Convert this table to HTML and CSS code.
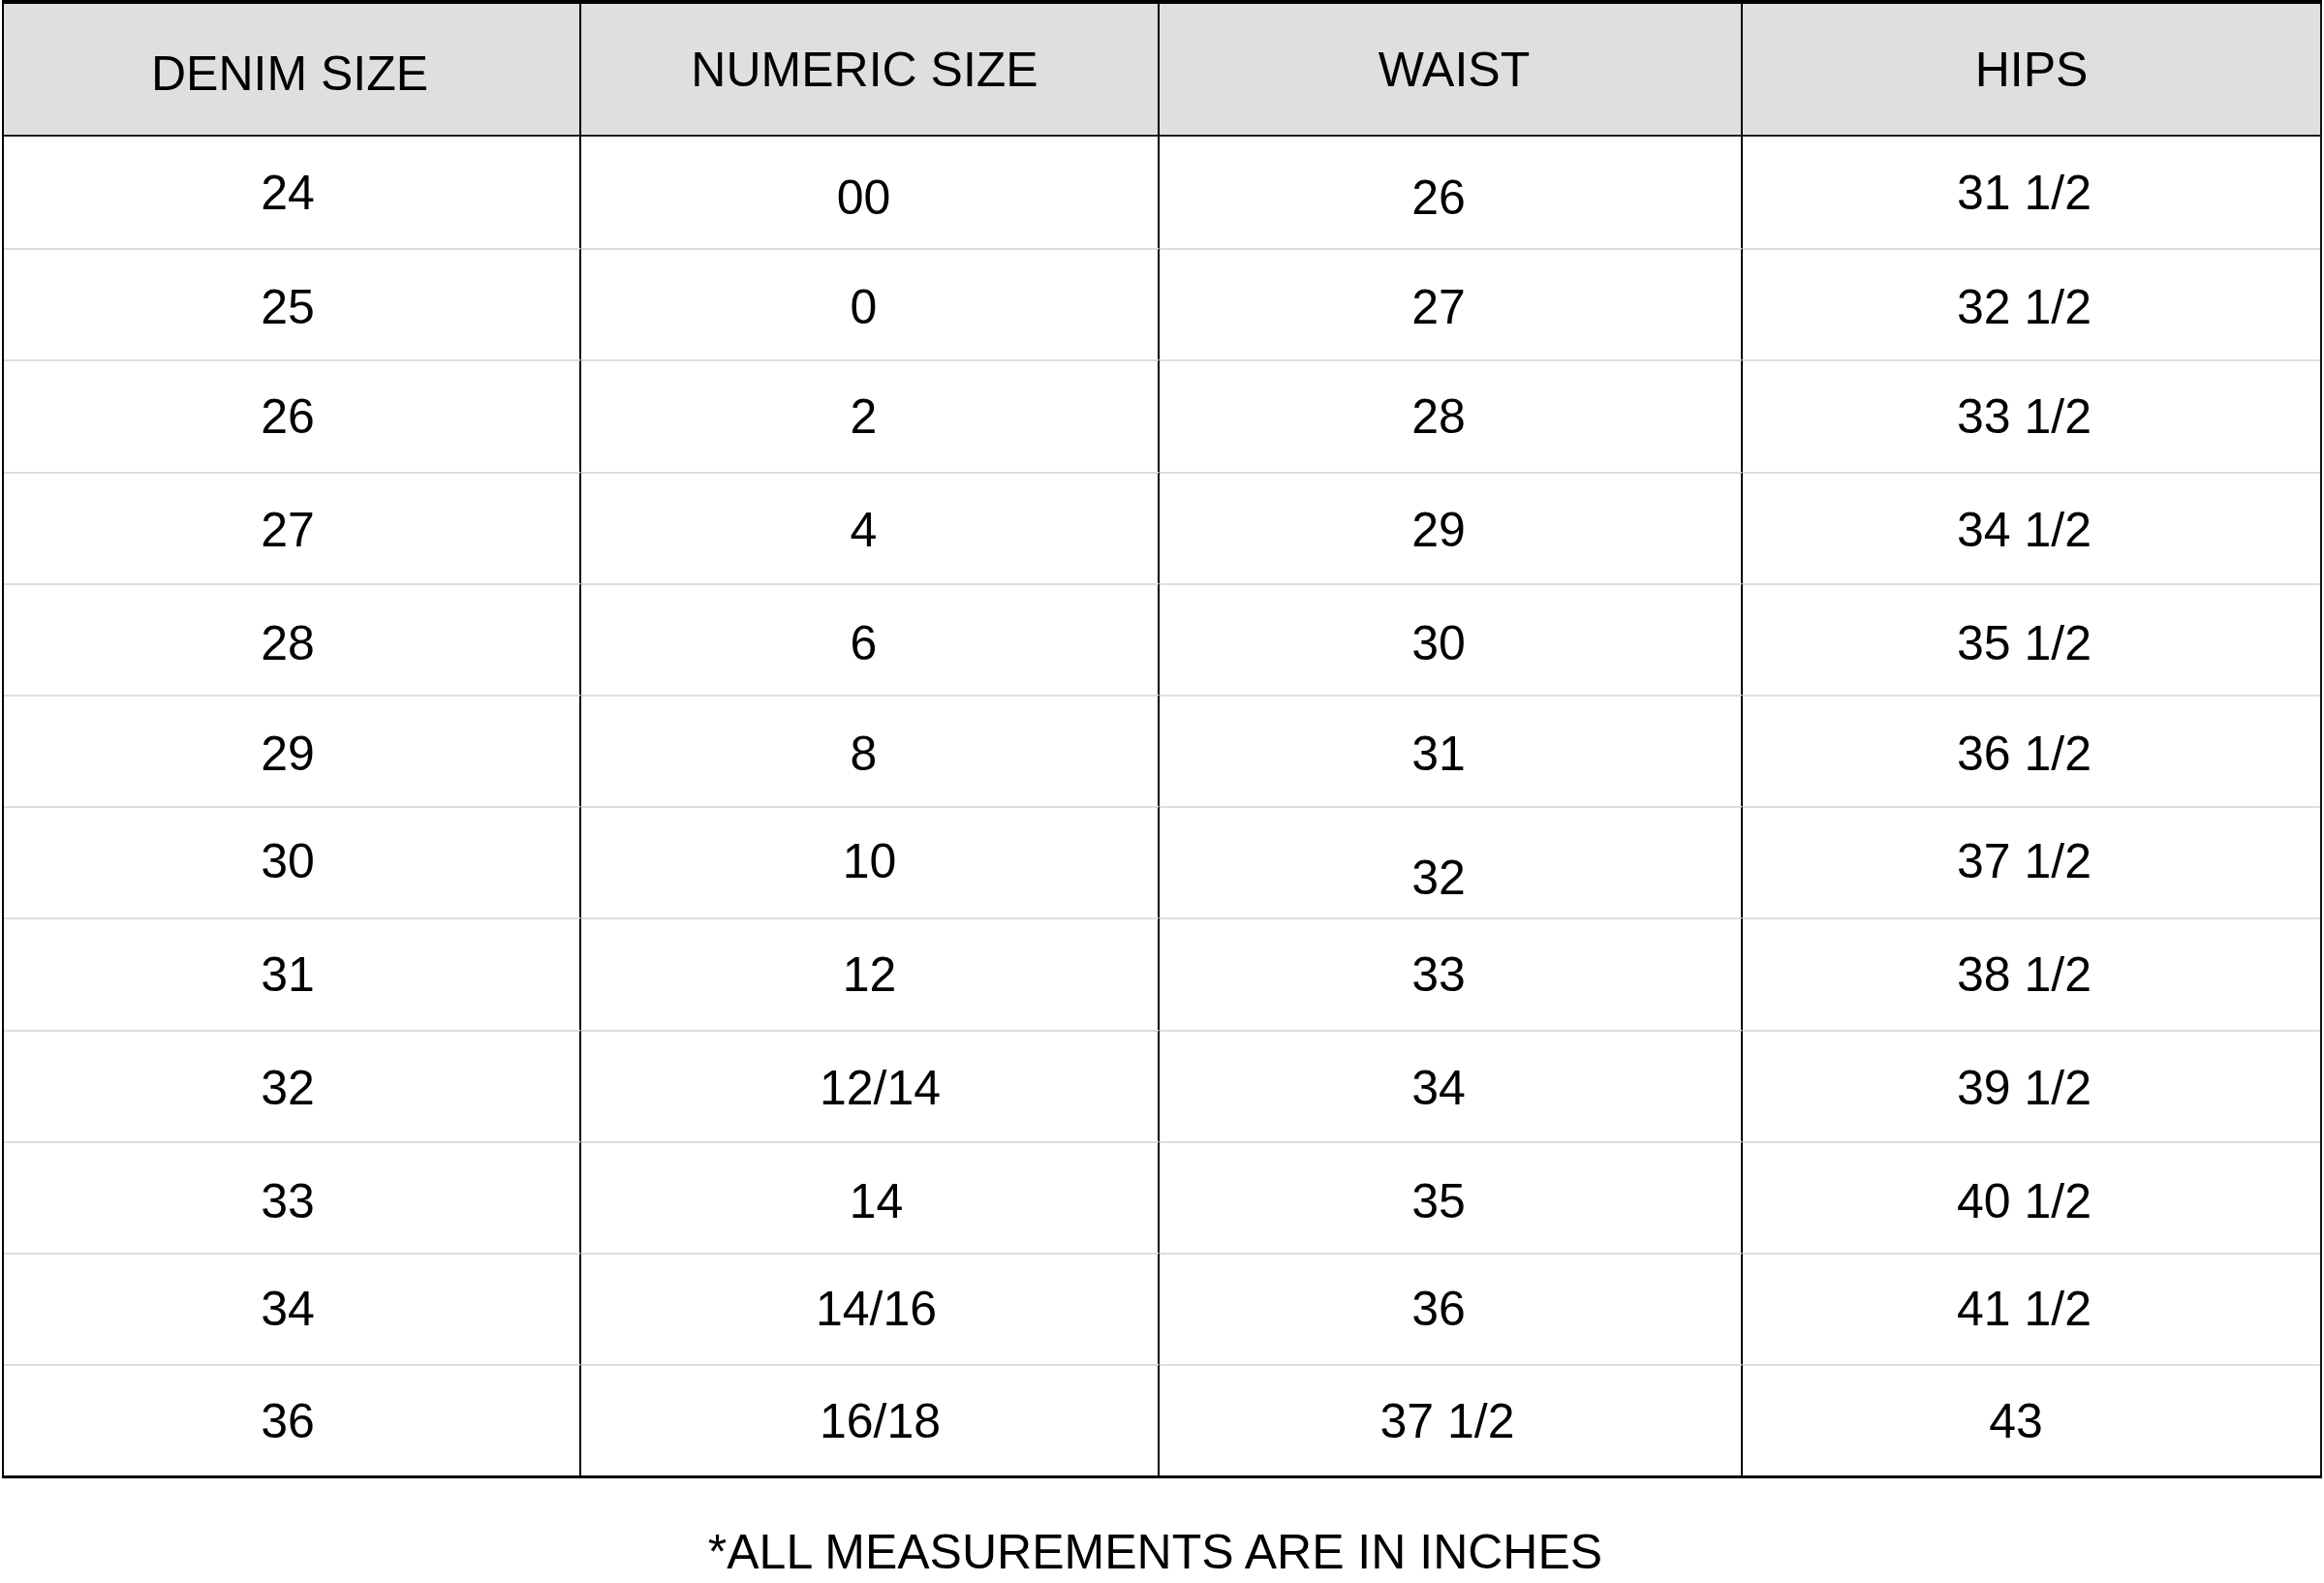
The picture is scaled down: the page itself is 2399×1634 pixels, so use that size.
FILE: index.html
```html
<!DOCTYPE html>
<html lang="en">
<head>
<meta charset="utf-8">
<title>Denim Size Chart</title>
<link rel="stylesheet" href="styles.css">
</head>
<body>
<main class="page">
  <table class="chart">
    <thead>
      <tr class="head-row">
        <th class="c1 h-low">DENIM SIZE</th>
        <th class="c2">NUMERIC SIZE</th>
        <th class="c3">WAIST</th>
        <th class="c4">HIPS</th>
      </tr>
    </thead>
    <tbody>
      <tr><td>24</td><td class="d-lo">00</td><td class="d-lo">26</td><td>31 1/2</td></tr>
      <tr class="r-low-s"><td>25</td><td>0</td><td>27</td><td>32 1/2</td></tr>
      <tr><td>26</td><td>2</td><td>28</td><td>33 1/2</td></tr>
      <tr class="r-low-s"><td>27</td><td>4</td><td>29</td><td>34 1/2</td></tr>
      <tr class="r-low"><td>28</td><td>6</td><td>30</td><td>35 1/2</td></tr>
      <tr class="r-low-s"><td>29</td><td>8</td><td>31</td><td>36 1/2</td></tr>
      <tr class="r-high"><td>30</td><td class="two">10</td><td class="d-far">32</td><td>37 1/2</td></tr>
      <tr><td>31</td><td class="two">12</td><td>33</td><td>38 1/2</td></tr>
      <tr class="r-low-s"><td>32</td><td class="wide">12/14</td><td>34</td><td>39 1/2</td></tr>
      <tr class="r-low"><td>33</td><td class="wide-s">14</td><td>35</td><td>40 1/2</td></tr>
      <tr><td>34</td><td class="wide-s">14/16</td><td>36</td><td>41 1/2</td></tr>
      <tr class="last"><td>36</td><td class="wide">16/18</td><td class="half">37 1/2</td><td class="short">43</td></tr>
    </tbody>
  </table>
  <p class="note">*ALL MEASUREMENTS ARE IN INCHES</p>
</main>
</body>
</html>
```

FILE: styles.css
```css
html, body {
  margin: 0;
  padding: 0;
  background: #ffffff;
}

body {
  font-family: "Liberation Sans", Arial, sans-serif;
  color: #000000;
}

.page {
  width: 2399px;
  padding-left: 2px;
  box-sizing: border-box;
}

.chart {
  width: 2395px;
  table-layout: fixed;
  border-collapse: separate;
  border-spacing: 0;
  border-top: 4px solid #000;
  border-left: 2px solid #000;
  border-right: 2px solid #111;
  border-bottom: 3px solid #000;
  font-size: 50px;
  line-height: 56px;
}

.chart th,
.chart td {
  box-sizing: border-box;
  padding: 0;
  text-align: center;
  vertical-align: middle;
  border-right: 2px solid #000;
  font-weight: normal;
}

.chart th:last-child,
.chart td:last-child {
  border-right: 0;
}

.chart th.c1 { width: 596px; }
.chart th.c2 { width: 597px; }
.chart th.c3 { width: 602px; }
.chart th.c4 { width: 596px; }

.head-row {
  height: 137px;
}

.head-row th {
  background: #dfdfdf;
  border-bottom: 2px solid #1e1e1e;
}

.head-row th.c1 {
  padding-right: 4px;
}

.head-row th.h-low {
  padding-top: 8px;
}

.head-row th.c2 {
  padding-right: 10px;
}

.head-row th.c3 {
  padding-left: 8px;
}

.chart tbody tr {
  height: 115.2px;
}

.chart tbody tr + tr td {
  border-top: 2px solid #dddddd;
}

/* horizontal optical placement per column */
.chart tbody td:nth-child(1) { padding-right: 8px; }
.chart tbody td:nth-child(2) { padding-right: 12px; }
.chart tbody td:nth-child(3) { padding-right: 24px; }
.chart tbody td:nth-child(4) { padding-right: 15px; }

.chart tbody td.two { padding-right: 0; }
.chart tbody td.wide { padding-left: 22px; padding-right: 0; }
.chart tbody td.wide-s { padding-left: 14px; padding-right: 0; }
.chart tbody td.half { padding-right: 6px; }
.chart tbody td.short { padding-right: 32px; }

/* vertical placement per row */
.chart tbody tr.r-low td { padding-top: 8px; }
.chart tbody tr.r-low-s td { padding-top: 4px; }
.chart tbody tr.r-high td { padding-bottom: 4px; }
.chart tbody tr td.d-lo { padding-top: 10px; }
.chart tbody tr td.d-far { padding-top: 30px; padding-bottom: 0; }

.note {
  margin: 48px 0 0 0;
  padding-right: 16px;
  text-align: center;
  font-size: 50px;
  line-height: 56px;
}
```
